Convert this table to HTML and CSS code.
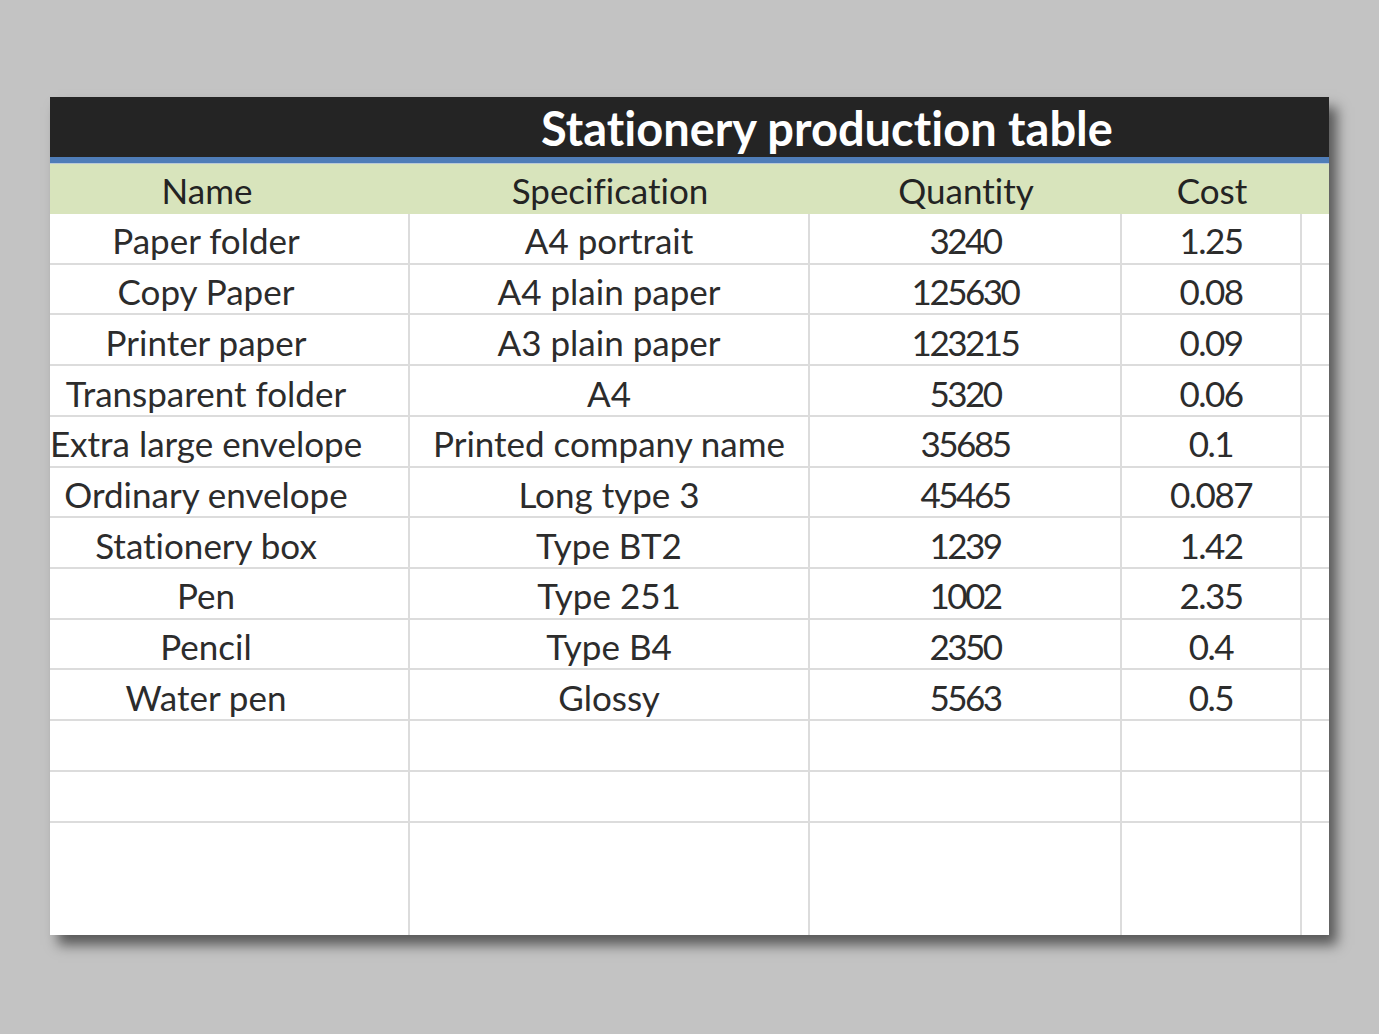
FILE: index.html
```html
<!DOCTYPE html>
<html>
<head>
<meta charset="utf-8">
<link rel="stylesheet" href="styles.css">
</head>
<body>
<div class="sheet">
  <div class="title"><span class="title-text">Stationery production table</span></div>
  <div class="grid">
    <div class="hd first">Name</div><div class="hd">Specification</div><div class="hd">Quantity</div><div class="hd">Cost</div><div class="hd last"></div>

    <div class="c first">Paper folder</div><div class="c">A4 portrait</div><div class="c qty">3240</div><div class="c cost">1.25</div><div class="c last"></div>
    <div class="c first">Copy Paper</div><div class="c">A4 plain paper</div><div class="c qty">125630</div><div class="c cost">0.08</div><div class="c last"></div>
    <div class="c first">Printer paper</div><div class="c">A3 plain paper</div><div class="c qty">123215</div><div class="c cost">0.09</div><div class="c last"></div>
    <div class="c first">Transparent folder</div><div class="c">A4</div><div class="c qty">5320</div><div class="c cost">0.06</div><div class="c last"></div>
    <div class="c first">Extra large envelope</div><div class="c">Printed company name</div><div class="c qty">35685</div><div class="c cost">0.1</div><div class="c last"></div>
    <div class="c first">Ordinary envelope</div><div class="c">Long type 3</div><div class="c qty">45465</div><div class="c cost">0.087</div><div class="c last"></div>
    <div class="c first">Stationery box</div><div class="c">Type BT2</div><div class="c qty">1239</div><div class="c cost">1.42</div><div class="c last"></div>
    <div class="c first">Pen</div><div class="c">Type 251</div><div class="c qty">1002</div><div class="c cost">2.35</div><div class="c last"></div>
    <div class="c first">Pencil</div><div class="c">Type B4</div><div class="c qty">2350</div><div class="c cost">0.4</div><div class="c last"></div>
    <div class="c first">Water pen</div><div class="c">Glossy</div><div class="c qty">5563</div><div class="c cost">0.5</div><div class="c last"></div>
    <div class="c first"></div><div class="c"></div><div class="c"></div><div class="c"></div><div class="c last"></div>
    <div class="c first"></div><div class="c"></div><div class="c"></div><div class="c"></div><div class="c last"></div>
    <div class="c first tail"></div><div class="c tail"></div><div class="c tail"></div><div class="c tail"></div><div class="c last tail"></div>
  </div>
</div>
</body>
</html>
```
FILE: styles.css
```css
html, body {
  margin: 0;
  padding: 0;
  background: #c3c3c3;
  width: 1379px;
  height: 1034px;
  overflow: hidden;
}
body {
  padding: 97px 0 0 50px;
  box-sizing: border-box;
  font-family: Lato, "Liberation Sans", sans-serif;
  font-variant-ligatures: none;
}
.sheet {
  width: 1279px;
  background: #fff;
  box-shadow: 8px 10px 12px rgba(0, 0, 0, 0.55);
}
.title {
  height: 60px;
  background: #242424;
  border-bottom: 6px solid #4f7db8;
  box-sizing: content-box;
  display: flex;
  align-items: center;
  padding-left: 491px;
}
.title-text {
  color: #fff;
  font-weight: 700;
  font-size: 47px;
  letter-spacing: 0;
  line-height: 1;
  margin-top: 2px;
}
.grid {
  display: grid;
  grid-template-columns: 360px 400px 312px 180px 27px;
  grid-template-rows: 51px repeat(12, 50.73px) 112px;
}
.hd {
  background: #d8e4bc;
  border-top: 1px solid #b9c9d8;
  color: #232323;
  font-size: 35px;
  display: flex;
  align-items: center;
  justify-content: center;
  padding-top: 1px;
  white-space: nowrap;
}
.c {
  border-right: 2px solid #dcdcdc;
  border-bottom: 2px solid #dcdcdc;
  color: #2c2c2c;
  font-size: 35px;
  display: flex;
  align-items: center;
  justify-content: center;
  white-space: nowrap;
  padding-top: 4px;
}
.qty {
  letter-spacing: -2.5px;
}
.cost {
  letter-spacing: -1.5px;
}
.first {
  padding-right: 46px;
}
.c.last {
  border-right: none;
}
.tail {
  border-bottom: none;
}
```
